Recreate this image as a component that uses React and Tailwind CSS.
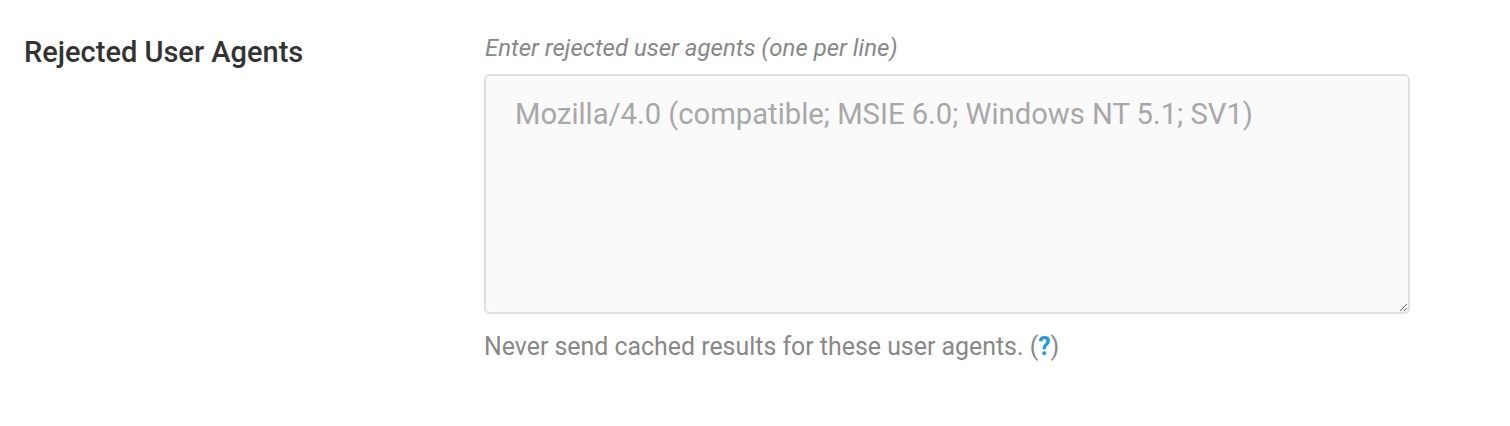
export default function App() {
  return (
    <div className="w-[1510px] h-[426px] bg-white" style={{ fontFamily: "Roboto, sans-serif" }}>
      <div className="flex pt-[34px]">
        <div className="w-[484px] pl-[24px]">
          <h2 className="text-[29px] leading-[36px] font-medium text-[#333]">Rejected User Agents</h2>
        </div>
        <div className="w-[926px]">
          <div className="text-[24px] leading-[28px] italic text-[#888] pl-[1px]">Enter rejected user agents (one per line)</div>
          <textarea
            className="mt-[12px] block w-[926px] h-[240px] rounded-[6px] border-2 border-[#e0e0e0] bg-[#fafafa] px-[29px] py-[20px] text-[29.2px] leading-[36px] text-[#a8a8a8] placeholder:text-[#a8a8a8] outline-none"
            placeholder="Mozilla/4.0 (compatible; MSIE 6.0; Windows NT 5.1; SV1)"
          />
          <div className="mt-[18px] text-[24.9px] leading-[30px] text-[#888]">
            Never send cached results for these user agents. (<span className="font-bold text-[#1e9ad6]">?</span>)
          </div>
        </div>
      </div>
    </div>
  );
}
